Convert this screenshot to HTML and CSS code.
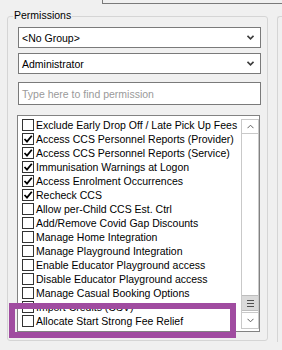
FILE: index.html
```html
<!DOCTYPE html>
<html>
<head>
<meta charset="utf-8">
<link rel="stylesheet" href="styles.css">
</head>
<body>
<div class="top-frag"></div>
<div class="main">
  <div class="group">
    <div class="legend">Permissions</div>
    <div class="select">
      <span>&lt;No Group&gt;</span>
      <svg class="chev" width="7" height="5" viewBox="0 0 7 5"><polyline points="0.5,0.8 3.5,3.8 6.5,0.8" fill="none" stroke="#3c3c3c" stroke-width="1.6"/></svg>
    </div>
    <div class="select second">
      <span>Administrator</span>
      <svg class="chev" width="7" height="5" viewBox="0 0 7 5"><polyline points="0.5,0.8 3.5,3.8 6.5,0.8" fill="none" stroke="#3c3c3c" stroke-width="1.6"/></svg>
    </div>
    <div class="search">Type here to find permission</div>
    <div class="list">
      <div class="items">
        <div class="row"><span class="cb"></span><span>Exclude Early Drop Off / Late Pick Up Fees</span></div>
        <div class="row"><span class="cb on"><svg width="10" height="10" viewBox="0 0 10 10"><polyline points="1.5,5 4,7.6 8.8,1.8" fill="none" stroke="#000" stroke-width="1.8"/></svg></span><span>Access CCS Personnel Reports (Provider)</span></div>
        <div class="row"><span class="cb on"><svg width="10" height="10" viewBox="0 0 10 10"><polyline points="1.5,5 4,7.6 8.8,1.8" fill="none" stroke="#000" stroke-width="1.8"/></svg></span><span>Access CCS Personnel Reports (Service)</span></div>
        <div class="row"><span class="cb on"><svg width="10" height="10" viewBox="0 0 10 10"><polyline points="1.5,5 4,7.6 8.8,1.8" fill="none" stroke="#000" stroke-width="1.8"/></svg></span><span>Immunisation Warnings at Logon</span></div>
        <div class="row"><span class="cb on"><svg width="10" height="10" viewBox="0 0 10 10"><polyline points="1.5,5 4,7.6 8.8,1.8" fill="none" stroke="#000" stroke-width="1.8"/></svg></span><span>Access Enrolment Occurrences</span></div>
        <div class="row"><span class="cb on"><svg width="10" height="10" viewBox="0 0 10 10"><polyline points="1.5,5 4,7.6 8.8,1.8" fill="none" stroke="#000" stroke-width="1.8"/></svg></span><span>Recheck CCS</span></div>
        <div class="row"><span class="cb"></span><span>Allow per-Child CCS Est. Ctrl</span></div>
        <div class="row"><span class="cb"></span><span>Add/Remove Covid Gap Discounts</span></div>
        <div class="row"><span class="cb"></span><span>Manage Home Integration</span></div>
        <div class="row"><span class="cb"></span><span>Manage Playground Integration</span></div>
        <div class="row"><span class="cb"></span><span>Enable Educator Playground access</span></div>
        <div class="row"><span class="cb"></span><span>Disable Educator Playground access</span></div>
        <div class="row"><span class="cb"></span><span>Manage Casual Booking Options</span></div>
        <div class="row"><span class="cb"></span><span>Import Credits (CSV)</span></div>
        <div class="row"><span class="cb"></span><span>Allocate Start Strong Fee Relief</span></div>
      </div>
      <div class="scrollbar">
        <div class="sb-up"><svg width="7" height="5" viewBox="0 0 7 5"><polyline points="0.5,4.2 3.5,1.2 6.5,4.2" fill="none" stroke="#606060" stroke-width="1"/></svg></div>
        <div class="sb-track"></div>
        <div class="sb-thumb"><span></span><span></span><span></span></div>
        <div class="sb-down"><svg width="7" height="5" viewBox="0 0 7 5"><polyline points="0.5,0.8 3.5,3.8 6.5,0.8" fill="none" stroke="#606060" stroke-width="1"/></svg></div>
      </div>
    </div>
  </div>
  <div class="side-group"></div>
</div>
<div class="annot"></div>
</body>
</html>
```
FILE: styles.css
```css
html, body {
  margin: 0;
  padding: 0;
}
body {
  width: 282px;
  height: 350px;
  overflow: hidden;
  background: #f0f0f0;
  font-family: "Liberation Sans", Arial, sans-serif;
  font-size: 10.5px;
  color: #000;
  position: relative;
}
.top-frag {
  height: 3px;
  margin-left: 102px;
  border-left: 1px solid #7a7a7a;
  border-bottom: 1px solid #7a7a7a;
}
.main {
  display: flex;
  padding-left: 7px;
  margin-top: 12px;
}
.group {
  position: relative;
  box-sizing: border-box;
  width: 261px;
  height: 325px;
  border: 1px solid #d5d5d5;
  border-radius: 3px;
  padding: 10px 6px 0 10px;
}
.legend {
  position: absolute;
  left: 5px;
  top: -8px;
  padding: 0 1px;
  line-height: 13px;
  background: #f0f0f0;
}
.select {
  box-sizing: border-box;
  height: 21px;
  width: 243px;
  border: 1px solid #7a7a7a;
  background: #fff;
  display: flex;
  align-items: center;
  justify-content: space-between;
  padding: 0 6px 0 3px;
}
.select.second {
  margin-top: 5px;
}
.chev {
  display: block;
}
.search {
  box-sizing: border-box;
  margin-top: 8px;
  height: 23px;
  width: 243px;
  border: 1px solid #7a7a7a;
  background: #fff;
  color: #9a9a9a;
  padding-left: 3px;
  display: flex;
  align-items: center;
}
.list {
  box-sizing: border-box;
  margin-top: 10px;
  margin-left: -1px;
  width: 243px;
  height: 217px;
  border: 1px solid #828282;
  background: #fff;
  display: flex;
}
.items {
  flex: 1;
  overflow: hidden;
  padding: 2px 0 0 4px;
  white-space: nowrap;
}
.row {
  height: 14px;
  display: flex;
  align-items: center;
}
.cb {
  box-sizing: border-box;
  width: 12px;
  height: 12px;
  border: 1px solid #333;
  background: #fff;
  margin-right: 2px;
  display: flex;
  align-items: center;
  justify-content: center;
  flex: none;
}
.cb svg {
  display: block;
}
.scrollbar {
  box-sizing: border-box;
  width: 18px;
  margin: 3px 0 2px 0;
  border: 1px solid #c9c9c9;
  display: flex;
  flex-direction: column;
  background: #fff;
}
.sb-up {
  height: 14px;
  box-sizing: border-box;
  border-bottom: 1px solid #c9c9c9;
  display: flex;
  align-items: center;
  justify-content: center;
}
.sb-track {
  flex: 1;
}
.sb-thumb {
  box-sizing: border-box;
  height: 16px;
  background: #dadada;
  border-top: 1px solid #bdbdbd;
  border-bottom: 1px solid #bdbdbd;
  display: flex;
  flex-direction: column;
  align-items: center;
  justify-content: center;
  gap: 2px;
}
.sb-thumb span {
  display: block;
  width: 7px;
  height: 1px;
  background: #505050;
}
.sb-down {
  box-sizing: border-box;
  margin-top: 1px;
  height: 16px;
  border-top: 1px solid #c9c9c9;
  display: flex;
  align-items: center;
  justify-content: center;
}
.side-group {
  margin-left: 9px;
  flex: 1;
  height: 325px;
  border-left: 1px solid #d5d5d5;
  border-top: 1px solid #d5d5d5;
  border-top-left-radius: 3px;
}
.annot {
  position: absolute;
  left: 9px;
  top: 303px;
  width: 227px;
  height: 35px;
  box-sizing: border-box;
  border: 6px solid #a04ca0;
}
```
